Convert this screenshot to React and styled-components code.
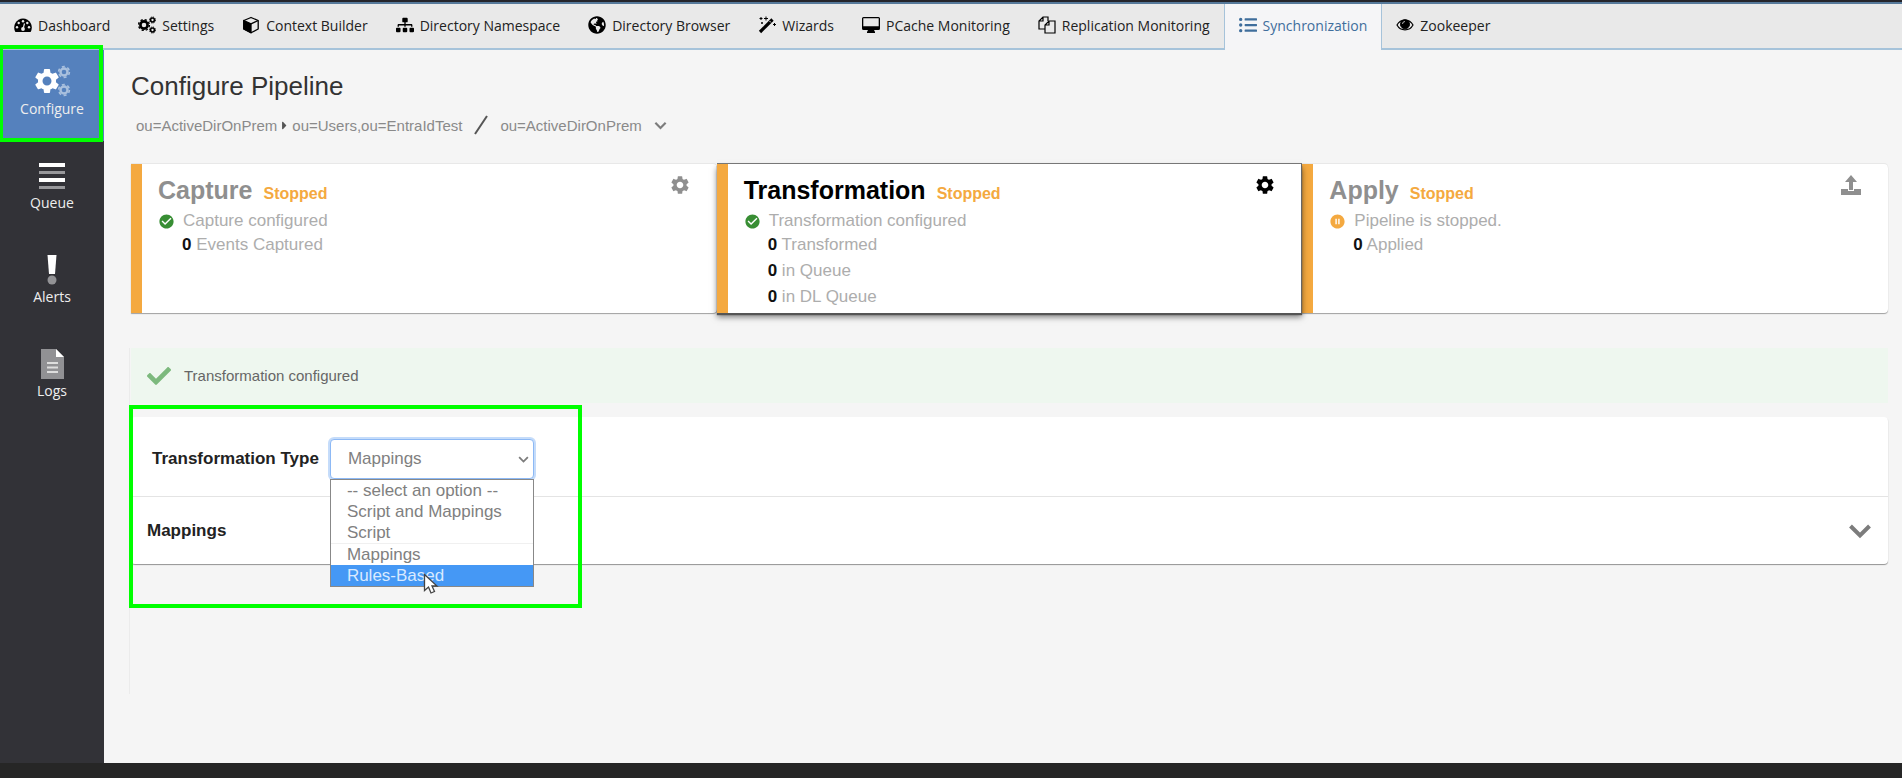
import React, { useState } from "react";
import styled, { createGlobalStyle } from "styled-components";
import { FaSitemap, FaGlobeAmericas, FaListUl, FaCaretRight, FaCheck } from "react-icons/fa";
import { MdCheckCircle, MdPauseCircleFilled, MdSettings } from "react-icons/md";

const GlobalStyle = createGlobalStyle`
  * {
    box-sizing: border-box;
  }
  body {
    margin: 0;
    background: #262626;
    font-family: "Liberation Sans", Arial, sans-serif;
    color: #333;
  }
  button, select {
    font-family: inherit;
  }
`;

const Page = styled.div`
  display: flex;
  flex-direction: column;
  min-height: 100vh;
  border-top: 2px solid #25252b;
  border-bottom: 15px solid #262626;
  background: #f5f5f5;
`;

const TopNav = styled.nav`
  display: flex;
  height: 48px;
  background: #e9e9e9;
  border-top: 2px solid #56799a;
`;

const NavTab = styled.a`
  display: flex;
  align-items: center;
  gap: 6px;
  padding: ${({ $active }) => ($active ? "0 14px 4px" : "0 14px 2px")};
  font-family: "Open Sans", sans-serif;
  font-size: 14px;
  white-space: nowrap;
  text-decoration: none;
  color: ${({ $active }) => ($active ? "#3f6e9c" : "#222")};
  background: ${({ $active }) => ($active ? "#f5f5f7" : "transparent")};
  border: solid #a6c3da;
  border-width: ${({ $active }) => ($active ? "0 1px" : "0 0 2px")};

  > svg {
    width: 18px;
    height: 18px;
    color: ${({ $active }) => ($active ? "#3f6e9c" : "#000")};
  }
`;

const NavRest = styled.div`
  flex: 1;
  border-bottom: 2px solid #a6c3da;
`;

const Body = styled.div`
  display: flex;
  flex: 1;
`;

const Sidebar = styled.aside`
  position: relative;
  display: flex;
  flex-direction: column;
  gap: 3px;
  width: 104px;
  flex-shrink: 0;
  background: #323237;
`;

const SideItem = styled.a`
  display: flex;
  flex-direction: column;
  align-items: center;
  height: 91px;
  padding-top: 13px;
  font-family: "Open Sans", sans-serif;
  font-size: 14px;
  line-height: 20px;
  text-decoration: none;
  color: #eee;
  background: ${({ $active }) => ($active ? "#5581bd" : "transparent")};

  > svg {
    width: 38px;
    height: 34px;
    margin-bottom: 2px;
  }
`;

const Highlight = styled.div`
  position: absolute;
  left: ${({ $left }) => $left}px;
  top: ${({ $top }) => $top}px;
  width: ${({ $width }) => $width}px;
  height: ${({ $height }) => $height}px;
  border: 4px solid #00ff00;
  pointer-events: none;
`;

const Main = styled.main`
  flex: 1;
  min-width: 0;
  padding: 20px 14px 66px 27px;
`;

const Title = styled.h1`
  margin: 0;
  font-size: 26px;
  line-height: 32px;
  font-weight: 400;
  color: #333;
`;

const Breadcrumb = styled.div`
  display: flex;
  align-items: center;
  height: 24px;
  margin-top: 11px;
  padding-left: 5px;
  font-size: 15px;
  color: #8a8a8a;

  svg {
    flex-shrink: 0;
    color: #555;
  }
  .slash {
    margin: 0 12px;
  }
  .caret {
    width: 9px;
    height: 13px;
    margin: 0 3px;
  }
  .more {
    margin-left: 12px;
  }
`;

const Cards = styled.div`
  display: grid;
  grid-template-columns: repeat(3, 1fr);
  margin-top: 27px;
`;

const Card = styled.section`
  display: flex;
  justify-content: space-between;
  height: 149px;
  padding: 10px 26px 0 16px;
  background: #fff;
  border-left: 11px solid #f4a940;
  border-radius: 0 4px 4px 0;
  color: #8f8f8f;
  box-shadow: 0 1px 1px rgba(0, 0, 0, 0.35), 0 -1px 0 rgba(0, 0, 0, 0.05);
  ${({ $selected }) =>
    $selected &&
    `
    z-index: 1;
    color: #000;
    border-radius: 0;
    box-shadow: 0 -1px 0 #777, inset -1px 0 0 #666, 0 2px 1px #555,
      0 4px 6px rgba(0, 0, 0, 0.5);
  `}
`;

const CardTitle = styled.h2`
  display: flex;
  align-items: baseline;
  gap: 11px;
  margin: 0;
  font-size: 25px;
  line-height: 32px;
`;

const Status = styled.span`
  font-size: 16px;
  color: #f4a940;
`;

const CardState = styled.div`
  display: flex;
  align-items: center;
  gap: 8px;
  height: 22px;
  font-size: 17px;
  color: #adadad;

  svg {
    width: 17px;
    height: 17px;
    color: ${({ $ok }) => ($ok ? "#388e34" : "#f4a940")};
  }
`;

const Counts = styled.ul`
  margin: 0;
  padding: 0 0 0 24px;
  list-style: none;
  font-size: 17px;
  line-height: 26px;
  color: #adadad;

  b {
    color: #111;
  }
`;

const IconButton = styled.button`
  align-self: flex-start;
  padding: 0;
  border: 0;
  background: none;
  color: inherit;
  line-height: 0;

  svg {
    width: 22px;
    height: 22px;
  }
`;

const Details = styled.div`
  margin: 35px 0 0 -2px;
  padding: 0 0 130px 1px;
  border-left: 1px solid #ebebeb;
`;

const Notice = styled.div`
  display: flex;
  align-items: center;
  gap: 13px;
  height: 55px;
  padding-left: 16px;
  background: #eef7ef;
  font-size: 15px;
  color: #666;

  svg {
    width: 24px;
    height: 24px;
    color: #7cb97d;
  }
`;

const Panel = styled.section`
  position: relative;
  margin-top: 14px;
  background: #fff;
  border-radius: 4px;
  box-shadow: 0 1px 1px rgba(0, 0, 0, 0.4);
`;

const TypeRow = styled.div`
  display: flex;
  align-items: center;
  gap: 11px;
  height: 80px;
  padding: 4px 0 0 21px;
  border-bottom: 1px solid #e4e4e4;
`;

const Label = styled.label`
  font-size: 17px;
  font-weight: 700;
  color: #222;
`;

const Picker = styled.div`
  position: relative;
  width: 204px;

  .arrow {
    position: absolute;
    right: 5px;
    top: 15px;
    pointer-events: none;
  }
`;

const Select = styled.select`
  appearance: none;
  display: block;
  width: 100%;
  height: 40px;
  padding: 0 17px;
  border: 1px solid #8db9f5;
  border-radius: 4px;
  box-shadow: 0 0 0 2px #c5dcfa;
  background: #fff;
  font-size: 17px;
  color: #808080;
`;

const Options = styled.ul`
  position: absolute;
  z-index: 2;
  left: 0;
  right: 0;
  top: 40px;
  margin: 0;
  padding: 0;
  border: 1px solid #888;
  background: #fff;
  list-style: none;
`;

const Option = styled.li`
  padding-left: 16px;
  font-size: 17px;
  line-height: 21px;
  white-space: nowrap;
  color: ${({ $active }) => ($active ? "#d9eaff" : "#808080")};
  background: ${({ $active }) => ($active ? "#4598f5" : "transparent")};

  &:nth-child(4) {
    border-top: 1px solid #f0f0f0;
  }
`;

const Pointer = styled.svg`
  position: absolute;
  z-index: 3;
  left: 93px;
  top: 134px;
`;

const MappingsRow = styled.button`
  display: flex;
  align-items: center;
  justify-content: space-between;
  width: 100%;
  height: 67px;
  padding: 0 16px;
  border: 0;
  background: none;
  font-size: 17px;
  font-weight: 700;
  color: #222;
`;

const DashboardIcon = () => (
  <svg viewBox="0 0 18 18">
    <path d="M9 2.500a9 9 0 0 1 7.600 13.500H1.400A9 9 0 0 1 9 2.500z" fill="currentColor" />
    <g fill="#e9e9e9">
      <circle cx="9" cy="5.200" r="1.200" />
      <circle cx="4.700" cy="7" r="1.200" />
      <circle cx="13.300" cy="7" r="1.200" />
      <circle cx="3" cy="11.300" r="1.200" />
      <circle cx="15" cy="11.300" r="1.200" />
    </g>
    <path d="M9 13l1.500-5.500" stroke="#e9e9e9" strokeWidth="1.200" />
    <circle cx="9" cy="13" r="1.900" fill="#e9e9e9" />
  </svg>
);

const SettingsIcon = () => (
  <svg viewBox="0 0 18 18" fill="none" stroke="currentColor">
    <circle cx="6" cy="9" r="3.600" strokeWidth="2.600" />
    <circle cx="6" cy="9" r="5.400" strokeWidth="1.400" strokeDasharray="2.240 2" />
    <circle cx="14.500" cy="4" r="1.900" strokeWidth="1.500" />
    <circle cx="14.500" cy="4" r="3" strokeWidth="1" strokeDasharray="1.350 1" />
    <circle cx="14.500" cy="14" r="1.900" strokeWidth="1.500" />
    <circle cx="14.500" cy="14" r="3" strokeWidth="1" strokeDasharray="1.350 1" />
  </svg>
);

const CubeIcon = () => (
  <svg viewBox="0 0 18 18" stroke="currentColor" strokeWidth="1.300" strokeLinejoin="round">
    <path d="M9 1.500l7.200 3v8.500L9 16.800 1.800 13V4.500z" fill="none" />
    <path d="M1.800 4.500L9 7.800v9L1.800 13z" fill="currentColor" />
    <path d="M9 7.800l7.200-3.300" />
  </svg>
);

const WandIcon = () => (
  <svg viewBox="0 0 18 18" stroke="currentColor" fill="none">
    <path d="M2 16L14.500 3.500" strokeWidth="3.200" />
    <path d="M11.500 5l1.500 1.500" stroke="#e9e9e9" strokeWidth="1" />
    <path d="M3 1v3M1.500 2.500h3M8 .5v4M6 2.500h4M16.500 7v3M15 8.500h3M4 6v2M3 7h2" strokeWidth="1" />
  </svg>
);

const MonitorIcon = () => (
  <svg viewBox="0 0 18 18">
    <path
      d="M1.500 1h15A1.500 1.500 0 0 1 18 2.500v10a1.500 1.500 0 0 1-1.500 1.500H12l1 2v1H5v-1l1-2H1.500A1.500 1.500 0 0 1 0 12.500v-10A1.500 1.500 0 0 1 1.500 1zM1.300 2.200v8h15.400v-8z"
      fill="currentColor"
      fillRule="evenodd"
    />
  </svg>
);

const CopyIcon = () => (
  <svg viewBox="0 0 18 18" fill="none" stroke="currentColor" strokeWidth="1.200">
    <path d="M7 13H1V5l4-4h5v4M5 1v4H1" />
    <path d="M7 17V9l4-4h6v12zM11 5v4H7" />
  </svg>
);

const EyeIcon = () => (
  <svg viewBox="0 0 18 18" fill="none" stroke="currentColor">
    <path d="M1 9c3.500-6.500 12.500-6.500 16 0-3.500 6.500-12.500 6.500-16 0z" strokeWidth="1.200" />
    <circle cx="9" cy="8.300" r="4.500" fill="currentColor" />
    <path d="M6.500 8A2.500 2.500 0 0 1 9 5.500" stroke="#ddd" strokeWidth=".8" />
  </svg>
);

const ConfigureIcon = () => (
  <svg viewBox="0 0 38 34">
    <MdSettings x="-1" y="3" size={30} color="#fff" />
    <g fill="none" stroke="#a9c0de">
      <circle cx="31" cy="9" r="3.500" strokeWidth="2.400" />
      <circle cx="31" cy="9" r="5.400" strokeWidth="1.600" strokeDasharray="3 2.650" />
      <circle cx="31" cy="27" r="3.500" strokeWidth="2.400" />
      <circle cx="31" cy="27" r="5.400" strokeWidth="1.600" strokeDasharray="3 2.650" />
    </g>
  </svg>
);

const QueueIcon = () => (
  <svg viewBox="0 0 38 34">
    <path d="M6 6h26v4H6zM6 21h26v4H6z" fill="#fff" />
    <path d="M6 14h26v3H6zM6 29h26v3H6z" fill="#98989b" />
  </svg>
);

const AlertsIcon = () => (
  <svg viewBox="0 0 38 34">
    <path d="M14.500 4h9l-1.500 19h-6z" fill="#fff" />
    <circle cx="19" cy="29" r="4.500" fill="#929295" />
  </svg>
);

const LogsIcon = () => (
  <svg viewBox="0 0 38 34">
    <path d="M8 4h15l8 8v22H8z" fill="#919194" />
    <path d="M23 4l8 8h-8z" fill="#fff" />
    <path d="M14 17h11v2H14zM14 21.500h11v2H14zM14 26h11v2H14z" fill="#ddd" />
  </svg>
);

const UploadIcon = () => (
  <svg viewBox="0 0 22 22" fill="currentColor">
    <path d="M11 1l6 7h-4v8H9V8H5z" />
    <path d="M1 15h7v2h6v-2h7v6H1z" />
  </svg>
);

const Chevron = ({ size, className }) => (
  <svg
    className={className}
    width={size}
    height={size}
    viewBox="0 0 24 24"
    fill="none"
    stroke="#7c7c7c"
    strokeWidth="4"
  >
    <path d="M2.500 7l9.500 9.500L21.500 7" />
  </svg>
);

const tabs = [
  { name: "Dashboard", icon: DashboardIcon },
  { name: "Settings", icon: SettingsIcon },
  { name: "Context Builder", icon: CubeIcon },
  { name: "Directory Namespace", icon: FaSitemap },
  { name: "Directory Browser", icon: FaGlobeAmericas },
  { name: "Wizards", icon: WandIcon },
  { name: "PCache Monitoring", icon: MonitorIcon },
  { name: "Replication Monitoring", icon: CopyIcon },
  { name: "Synchronization", icon: FaListUl, active: true },
  { name: "Zookeeper", icon: EyeIcon },
];

const sideItems = [
  { name: "Configure", icon: ConfigureIcon, active: true },
  { name: "Queue", icon: QueueIcon },
  { name: "Alerts", icon: AlertsIcon },
  { name: "Logs", icon: LogsIcon },
];

const stages = [
  { name: "Capture", state: "Capture configured", ok: true, counts: ["Events Captured"], action: MdSettings },
  {
    name: "Transformation",
    state: "Transformation configured",
    ok: true,
    selected: true,
    counts: ["Transformed", "in Queue", "in DL Queue"],
    action: MdSettings,
  },
  { name: "Apply", state: "Pipeline is stopped.", counts: ["Applied"], action: UploadIcon },
];

const types = ["-- select an option --", "Script and Mappings", "Script", "Mappings", "Rules-Based"];

const Stage = ({ name, state, ok, selected, counts, action: Action }) => (
  <Card $selected={selected}>
    <div>
      <CardTitle>
        {name} <Status>Stopped</Status>
      </CardTitle>
      <CardState $ok={ok}>
        {ok ? <MdCheckCircle /> : <MdPauseCircleFilled />}
        {state}
      </CardState>
      <Counts>
        {counts.map((count) => (
          <li key={count}>
            <b>0</b> {count}
          </li>
        ))}
      </Counts>
    </div>
    <IconButton aria-label={name}>
      <Action />
    </IconButton>
  </Card>
);

const App = () => {
  const [type, setType] = useState("Mappings");
  return (
    <>
      <GlobalStyle />
      <Page>
        <TopNav>
          {tabs.map(({ name, icon: Icon, active }) => (
            <NavTab key={name} href="#" $active={active}>
              <Icon />
              {name}
            </NavTab>
          ))}
          <NavRest />
        </TopNav>
        <Body>
          <Sidebar>
            {sideItems.map(({ name, icon: Icon, active }) => (
              <SideItem key={name} href="#" $active={active}>
                <Icon />
                {name}
              </SideItem>
            ))}
            <Highlight $left={-1} $top={-5} $width={104} $height={97} />
          </Sidebar>
          <Main>
            <Title>Configure Pipeline</Title>
            <Breadcrumb>
              ou=ActiveDirOnPrem
              <FaCaretRight className="caret" />
              ou=Users,ou=EntraIdTest
              <svg className="slash" width="14" height="20" viewBox="0 0 14 20" stroke="currentColor" strokeWidth="2">
                <path d="M1 19L13 1" />
              </svg>
              ou=ActiveDirOnPrem
              <Chevron className="more" size={13} />
            </Breadcrumb>
            <Cards>
              {stages.map((stage) => (
                <Stage key={stage.name} {...stage} />
              ))}
            </Cards>
            <Details>
              <Notice>
                <FaCheck />
                Transformation configured
              </Notice>
              <Panel>
                <TypeRow>
                  <Label htmlFor="type">Transformation Type</Label>
                  <Picker>
                    <Select id="type" value={type} onChange={(e) => setType(e.target.value)}>
                      {types.map((item) => (
                        <option key={item}>{item}</option>
                      ))}
                    </Select>
                    <Chevron className="arrow" size={11} />
                    <Options>
                      {types.map((item) => (
                        <Option key={item} $active={item === "Rules-Based"}>
                          {item}
                        </Option>
                      ))}
                    </Options>
                    <Pointer width="16" height="22" viewBox="0 0 16 22">
                      <path
                        d="M1.500 1.500v16l4-3.500 2.500 6 3.500-1.500-2.500-5.500h5z"
                        fill="#fff"
                        stroke="#444"
                        strokeWidth="1.300"
                      />
                    </Pointer>
                  </Picker>
                </TypeRow>
                <MappingsRow>
                  Mappings
                  <Chevron size={24} />
                </MappingsRow>
                <Highlight $left={-2} $top={-12} $width={453} $height={203} />
              </Panel>
            </Details>
          </Main>
        </Body>
      </Page>
    </>
  );
};

export default App;
